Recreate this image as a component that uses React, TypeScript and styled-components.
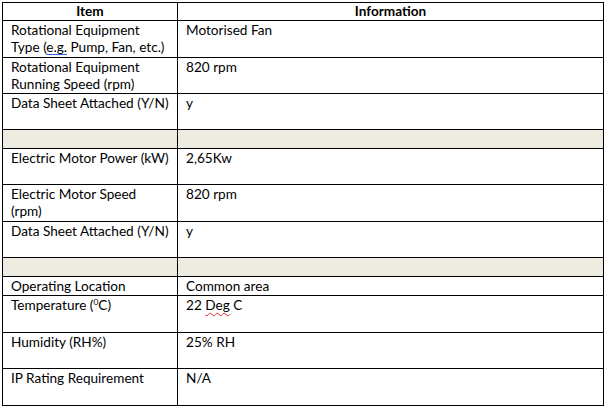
import React from 'react';
import styled, { createGlobalStyle } from 'styled-components';

const GlobalStyle = createGlobalStyle`
  html, body {
    margin: 0;
    padding: 0;
    background: #ffffff;
  }
  body {
    font-family: Lato, "Open Sans", "Liberation Sans", sans-serif;
    color: #000000;
  }
`;

const Page = styled.div`
  padding: 2px 0 0 2px;
`;

const Table = styled.table`
  border-collapse: collapse;
  table-layout: fixed;
  width: 602px;
  font-size: 13.6px;
  line-height: 17px;
`;

const Row = styled.tr<{ $h: number }>`
  height: ${(p) => p.$h}px;
`;

const HeadCell = styled.th`
  border: 1px solid #000;
  font-weight: 700;
  text-align: center;
  vertical-align: top;
  padding: 0 8px;
`;

const Cell = styled.td<{ $shaded?: boolean }>`
  border: 1px solid #000;
  vertical-align: top;
  padding: 1px 8px 0 8px;
  background: ${(p) => (p.$shaded ? '#eeece1' : '#ffffff')};
  white-space: nowrap;
  overflow: hidden;
`;

const Sup = styled.sup`
  font-size: 0.62em;
  line-height: 0;
  vertical-align: 0.55em;
`;

const Grammar = styled.span`
  text-decoration: underline;
  text-decoration-color: #2f5cd6;
  text-underline-offset: 2px;
`;

const Spelling = styled.span`
  text-decoration: underline wavy #e0201f;
  text-decoration-thickness: 1px;
  text-underline-offset: 2px;
`;

type Item = { label: React.ReactNode; value?: React.ReactNode; h: number; shaded?: boolean };

const rows: Item[] = [
  {
    label: <>Rotational Equipment<br />Type (<Grammar>e.g.</Grammar> Pump, Fan, etc.)</>,
    value: 'Motorised Fan',
    h: 37,
  },
  { label: <>Rotational Equipment<br />Running Speed (rpm)</>, value: '820 rpm', h: 36 },
  { label: 'Data Sheet Attached (Y/N)', value: 'y', h: 36 },
  { label: '', h: 19, shaded: true },
  { label: 'Electric Motor Power (kW)', value: '2,65Kw', h: 36 },
  { label: <>Electric Motor Speed<br />(rpm)</>, value: '820 rpm', h: 37 },
  { label: 'Data Sheet Attached (Y/N)', value: 'y', h: 36 },
  { label: '', h: 19, shaded: true },
  { label: 'Operating Location', value: 'Common area', h: 18 },
  { label: <>Temperature (<Sup>0</Sup>C)</>, value: <>22 <Spelling>Deg</Spelling> C</>, h: 37 },
  { label: 'Humidity (RH%)', value: '25% RH', h: 36 },
  { label: 'IP Rating Requirement', value: 'N/A', h: 37 },
];

export default function App() {
  return (
    <Page>
      <GlobalStyle />
      <Table>
        <colgroup>
          <col style={{ width: 175 }} />
          <col />
        </colgroup>
        <thead>
          <Row $h={18}>
            <HeadCell>Item</HeadCell>
            <HeadCell>Information</HeadCell>
          </Row>
        </thead>
        <tbody>
          {rows.map((r, i) => (
            <Row key={i} $h={r.h}>
              <Cell $shaded={r.shaded}>{r.label}</Cell>
              <Cell $shaded={r.shaded}>{r.value}</Cell>
            </Row>
          ))}
        </tbody>
      </Table>
    </Page>
  );
}
